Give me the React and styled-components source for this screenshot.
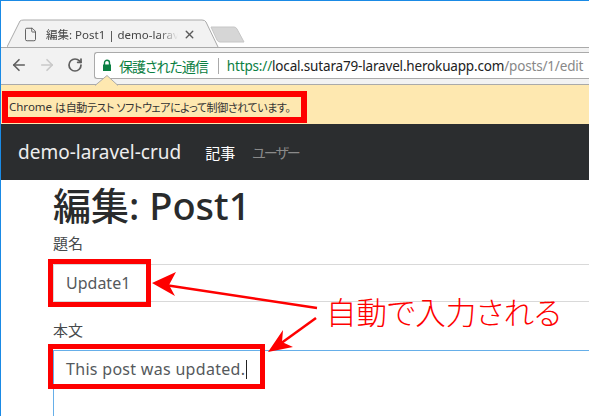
import { ArrowLeft, ArrowRight, RotateCw, X, File } from 'lucide-react';
import styled, { createGlobalStyle } from 'styled-components';

const GlobalStyle = createGlobalStyle`
  *, *::before, *::after { box-sizing: border-box; margin: 0; padding: 0; }
  html, body { width: 589px; height: 416px; overflow: hidden; background: #fff; }
  body {
    font-family: 'Noto Sans', 'Noto Sans CJK JP', sans-serif;
    font-feature-settings: 'palt';
  }
`;

const Screen = styled.div`
  position: relative;
  width: 589px;
  height: 416px;
  overflow: hidden;
  background: #fff;
  border-top: 1px solid #1a8ae5;
  border-left: 1px solid #1a8ae5;
`;

/* Tab strip */
const TabStrip = styled.div`
  position: relative;
  height: 47px;
  background: #fff;
  border-bottom: 1px solid #aaa;
  display: flex;
  align-items: flex-end;
`;

const TabShape = styled.svg`
  position: absolute;
  left: 6px;
  top: 17px;
`;

const Tab = styled.div`
  position: relative;
  width: 204px;
  height: 28px;
  margin-left: 7px;
  margin-bottom: -1px;
  display: flex;
  align-items: center;
  padding: 0 14px 0 15px;
  color: #5a5a5a;
`;

const TabTitle = styled.span`
  margin-left: 8px;
  width: 132px;
  font-size: 11.5px;
  white-space: nowrap;
  color: #444;
  -webkit-mask-image: linear-gradient(90deg, #000 85%, transparent);
  mask-image: linear-gradient(90deg, #000 85%, transparent);
`;

const TabClose = styled.span`
  display: flex;
  margin-left: 5px;
`;

const NewTab = styled.svg`
  margin-left: -2px;
  margin-bottom: 3px;
`;

/* Toolbar */
const Toolbar = styled.div`
  height: 37px;
  background: #f2f2f2;
  border-bottom: 1px solid #aaa;
  display: flex;
  align-items: flex-start;
  gap: 8px;
  padding: 4px 0 0 8px;
`;

const NavButton = styled.span`
  display: flex;
  width: 20px;
  height: 26px;
  align-items: center;
  justify-content: center;
  color: ${(p) => (p.$off ? '#c9c9c9' : '#5f5f5f')};
`;

const AddressBar = styled.div`
  flex: 1;
  min-width: 0;
  height: 27px;
  margin-left: 1px;
  background: #fff;
  border: 1px solid #aaa;
  border-right: none;
  border-radius: 3px 0 0 3px;
  display: flex;
  align-items: center;
  padding-left: 7px;
  white-space: nowrap;
`;

const Secure = styled.span`
  margin-left: 7px;
  font-size: 14px;
  letter-spacing: -1px;
  color: #0b8043;
`;

const UrlDivider = styled.span`
  width: 1px;
  height: 16px;
  margin: 0 8px 0 10px;
  background: #aaa;
`;

const Url = styled.span`
  font-size: 13.5px;
  letter-spacing: -0.17px;
  color: #222;
`;

const UrlScheme = styled.span`
  color: #0b8043;
`;

const UrlPath = styled.span`
  color: #888;
`;

const Bubble = styled.svg`
  position: absolute;
  left: 94px;
  top: 74px;
`;

/* Automation notice */
const InfoBar = styled.div`
  height: 39px;
  background: #fee8b0;
  display: flex;
  align-items: center;
  padding: 4px 0 0 8px;
  font-size: 11.5px;
  color: #333;
  white-space: pre;
`;

const InfoText = styled.span`
  font-size: 11px;
  letter-spacing: -0.4px;
`;

/* Site navbar */
const Navbar = styled.nav`
  height: 56px;
  background: #2b2d2f;
  display: flex;
  align-items: center;
  padding-left: 17px;
`;

const Brand = styled.span`
  font-size: 19px;
  color: #eee;
  margin-right: 24px;
`;

const NavLink = styled.span`
  font-size: ${(p) => (p.$active ? 15 : 14)}px;
  letter-spacing: ${(p) => (p.$active ? 0 : -2)}px;
  margin-right: 17px;
  color: ${(p) => (p.$active ? '#fff' : '#8a8a8a')};
`;

/* Form */
const Content = styled.main`
  width: 700px;
  padding-left: 52px;
`;

const Heading = styled.h1`
  font-size: 38px;
  font-weight: 500;
  line-height: 50px;
  color: #292b2c;
`;

const FieldLabel = styled.label`
  display: block;
  font-size: 15px;
  line-height: 20px;
  color: #464a4c;
  margin-top: ${(p) => p.$top}px;
`;

const TextInput = styled.div`
  height: 38px;
  margin-top: 11px;
  border: 1px solid #d9d9d9;
  padding-left: 12px;
  font-size: 16px;
  line-height: 36px;
  color: #55595c;
`;

const TextArea = styled(TextInput)`
  height: 120px;
  margin-top: 10px;
  border-color: #66afe9;
  letter-spacing: 0.3px;
`;

const Caret = styled.span`
  display: inline-block;
  width: 1px;
  height: 19px;
  margin-left: 1px;
  vertical-align: -4px;
  background: #222;
`;

/* Red annotations on top of the screenshot */
const Mark = styled.div`
  position: absolute;
  left: ${(p) => p.$x}px;
  top: ${(p) => p.$y}px;
  width: ${(p) => p.$w}px;
  height: ${(p) => p.$h}px;
  border: ${(p) => p.$b}px solid #fe0000;
`;

const Arrows = styled.svg`
  position: absolute;
  left: -1px;
  top: -1px;
`;

const Note = styled.span`
  position: absolute;
  left: 325px;
  top: 290px;
  font-size: 30.5px;
  font-weight: 300;
  line-height: 42px;
  white-space: nowrap;
  color: #fe0000;
`;

const LockIcon = () => (
  <svg width="10" height="13" viewBox="0 0 10 13">
    <path d="M2.5 6 V3.8 a2.5 2.5 0 0 1 5 0 V6" fill="none" stroke="#0b8043" strokeWidth="1.4" />
    <rect x="1" y="5.5" width="8" height="6.5" fill="#0b8043" />
  </svg>
);

export default function App() {
  return (
    <>
      <GlobalStyle />
      <Screen>
        <TabStrip>
          <TabShape width="216" height="30" viewBox="0 0 216 30">
            <path d="M0 29 L13 3 Q14 2 17 2 L195 2 Q198 2 199 4 L211 29" fill="#f2f2f2" stroke="#aaa" strokeWidth="1" />
          </TabShape>
          <Tab>
            <File size={15} strokeWidth={1.5} />
            <TabTitle>編集: Post1 | demo-larave</TabTitle>
            <TabClose><X size={13} strokeWidth={2.6} /></TabClose>
          </Tab>
          <NewTab width="36" height="18" viewBox="0 0 36 18">
            <path d="M1 1 L24 1 Q26 1 27 3 L34 16 L10 16 Q8 16 7 14 Z" fill="#d6d6d6" stroke="#c6c6c6" />
          </NewTab>
        </TabStrip>
        <Toolbar>
          <NavButton><ArrowLeft size={18} strokeWidth={2.2} /></NavButton>
          <NavButton $off><ArrowRight size={18} strokeWidth={2.2} /></NavButton>
          <NavButton><RotateCw size={16} strokeWidth={2.6} /></NavButton>
          <AddressBar>
            <LockIcon />
            <Secure>保護された通信</Secure>
            <UrlDivider />
            <Url>
              <UrlScheme>https://</UrlScheme>local.sutara79-laravel.herokuapp.com<UrlPath>/posts/1/edit</UrlPath>
            </Url>
          </AddressBar>
        </Toolbar>
        <Bubble width="24" height="11" viewBox="0 0 24 11">
          <path d="M0 10.5 L12 0.5 L23 10.5" fill="#fee8b0" stroke="#aaa" />
        </Bubble>
        <InfoBar>Chrome <InfoText>は自動テスト ソフトウェアによって制御されています。</InfoText></InfoBar>
        <Navbar>
          <Brand>demo-laravel-crud</Brand>
          <NavLink $active>記事</NavLink>
          <NavLink>ユーザー</NavLink>
        </Navbar>
        <Content>
          <Heading>編集: Post1</Heading>
          <FieldLabel $top={3}>題名</FieldLabel>
          <TextInput>Update1</TextInput>
          <FieldLabel $top={18}>本文</FieldLabel>
          <TextArea>This post was updated.<Caret /></TextArea>
        </Content>

        <Mark $x={1} $y={90} $w={305} $h={32} $b={6} />
        <Mark $x={47} $y={258} $w={103} $h={48} $b={5} />
        <Mark $x={47} $y={343} $w={217} $h={45} $b={5} />
        <Arrows width="589" height="416" viewBox="0 0 589 416">
          <path d="M317 308 L165 285" stroke="#fe0000" strokeWidth="2.5" fill="none" />
          <path d="M152 283 L176 272 L169 285 L175 296 Z" fill="#fe0000" />
          <path d="M316 318 L280 344" stroke="#fe0000" strokeWidth="2.5" fill="none" />
          <path d="M268 352 L283 330 L282 342 L293 347 Z" fill="#fe0000" />
        </Arrows>
        <Note>自動で入力される</Note>
      </Screen>
    </>
  );
}
